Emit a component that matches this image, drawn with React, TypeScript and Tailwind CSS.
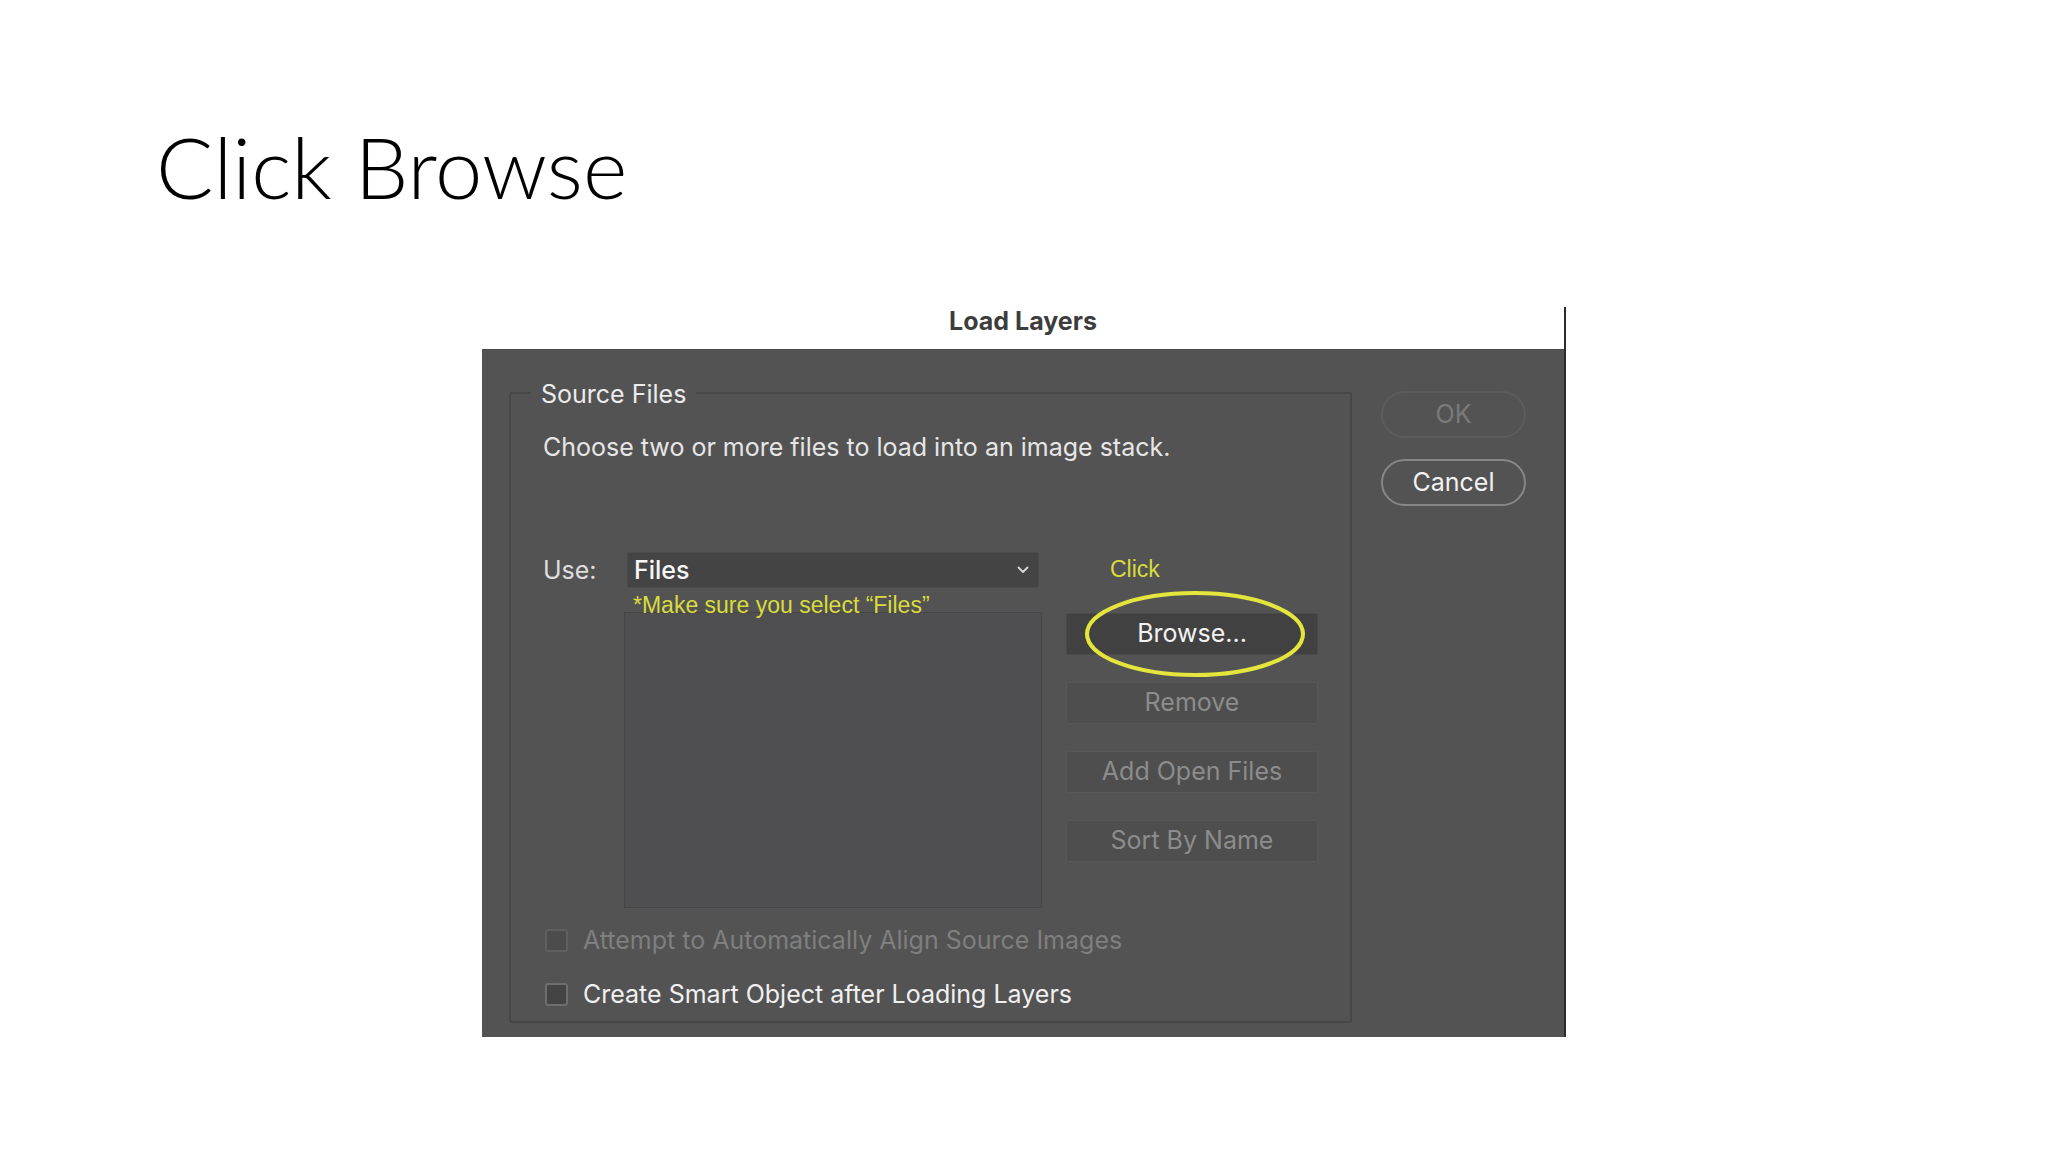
import React from "react";

function Chevron() {
  return (
    <svg width="12" height="8" viewBox="0 0 12 8" className="shrink-0">
      <path d="M1.5 1.5 L6 6 L10.5 1.5" fill="none" stroke="#d8d8d8" strokeWidth="1.8" strokeLinecap="round" strokeLinejoin="round" />
    </svg>
  );
}

function SideButton({ label, active }: { label: string; active?: boolean }) {
  return (
    <div
      className={
        active
          ? "h-[42px] w-full flex items-center justify-center bg-[#414141] border border-[#4a4a4a] rounded-[2px] text-[25px] text-[#f2f2f2]"
          : "h-[42px] w-full flex items-center justify-center bg-[#4e4e4e] border border-[#575757] rounded-[2px] text-[25px] text-[#8c8c8c]"
      }
    >
      {label}
    </div>
  );
}

function Check({ label, disabled }: { label: string; disabled?: boolean }) {
  return (
    <div className="flex items-center h-[24px] ml-[2px] gap-[15px]">
      <div
        className={
          disabled
            ? "w-[23px] h-[23px] rounded-[3px] border-2 border-[#5f5f5f] bg-[#4c4c4c]"
            : "w-[23px] h-[23px] rounded-[3px] border-2 border-[#6e6e6e] bg-[#444444]"
        }
      />
      <span className={disabled ? "text-[25px] leading-[30px] text-[#7f7f7f]" : "text-[25px] leading-[30px] text-[#f0f0f0]"}>{label}</span>
    </div>
  );
}

export default function App() {
  return (
    <div className="w-[2048px] h-[1152px] bg-white overflow-hidden flex flex-col">
      <div
        className="mt-[124px] h-[85px] pl-[156px] text-[85px] leading-none font-light text-black"
        style={{ fontFamily: "Lato, 'Open Sans', sans-serif" }}
      >
        Click Browse
      </div>

      <div
        className="relative mt-[98px] ml-[482px] w-[1084px] flex flex-col border-r-2 border-[#2c2c2c]"
        style={{ fontFamily: "Inter, 'Noto Sans', sans-serif" }}
      >
        <div className="h-[42px] bg-white flex justify-center items-start">
          <span className="text-[25px] leading-[28px] font-bold text-[#3d3d3d]">Load Layers</span>
        </div>

        <div className="h-[688px] bg-[#535353] border-t border-[#4a4a4a] flex items-start pl-[27px] pt-[28px]">
          <fieldset className="w-[843px] h-[645px] border-2 border-[#474747] rounded-[3px] p-0 m-0 shrink-0">
            <legend className="ml-[20px] px-[10px] pt-[3px] leading-[27px] text-[25px] text-[#ececec]">Source Files</legend>
            <div className="flex flex-col pl-[32px]">
              <div className="mt-[23px] text-[25px] leading-[32px] text-[#e6e6e6]">
                Choose two or more files to load into an image stack.
              </div>

              <div className="mt-[89px] h-[36px] flex items-center">
                <span className="w-[84px] text-[25px] leading-[30px] text-[#dedede]">Use:</span>
                <div className="w-[412px] h-[36px] bg-[#444444] border border-[#4b4b4b] rounded-[2px] flex items-center justify-between pl-[6px] pr-[9px]">
                  <span className="text-[25px] leading-[30px] font-medium text-[#f6f6f6]">Files</span>
                  <Chevron />
                </div>
              </div>

              <div className="mt-[24px] flex items-start">
                <div className="ml-[81px] w-[418px] h-[296px] bg-[#4f4e50] border border-[#464646] shrink-0" />
                <div className="ml-[24px] w-[252px] pt-[1px] flex flex-col gap-[27px] shrink-0">
                  <SideButton label="Browse..." active />
                  <SideButton label="Remove" />
                  <SideButton label="Add Open Files" />
                  <SideButton label="Sort By Name" />
                </div>
              </div>

              <div className="mt-[20px]">
                <Check label="Attempt to Automatically Align Source Images" disabled />
              </div>
              <div className="mt-[30px]">
                <Check label="Create Smart Object after Loading Layers" />
              </div>
            </div>
          </fieldset>

          <div className="ml-[29px] flex flex-col mt-[13px]">
            <div className="w-[145px] h-[47px] rounded-full border-2 border-[#5c5c5c] flex items-center justify-center text-[25px] text-[#7a7a7a]">
              OK
            </div>
            <div className="mt-[21px] w-[145px] h-[47px] rounded-full border-2 border-[#878787] flex items-center justify-center text-[25px] text-[#f2f2f2]">
              Cancel
            </div>
          </div>
        </div>

        {/* annotations */}
        <div
          className="absolute left-[151px] top-[287px] text-[23px] leading-none text-[#d9dc3c] whitespace-nowrap"
          style={{ fontFamily: "'Liberation Sans', Arial, sans-serif" }}
        >
          *Make sure you select “Files”
        </div>
        <div
          className="absolute left-[628px] top-[251px] text-[23px] leading-none text-[#d9dc3c]"
          style={{ fontFamily: "'Liberation Sans', Arial, sans-serif" }}
        >
          Click
        </div>
        <svg className="absolute left-[601px] top-[282px]" width="224" height="90" viewBox="0 0 224 90">
          <ellipse cx="112" cy="45" rx="108" ry="41" fill="none" stroke="#e4e63e" strokeWidth="4" />
        </svg>
      </div>
    </div>
  );
}
